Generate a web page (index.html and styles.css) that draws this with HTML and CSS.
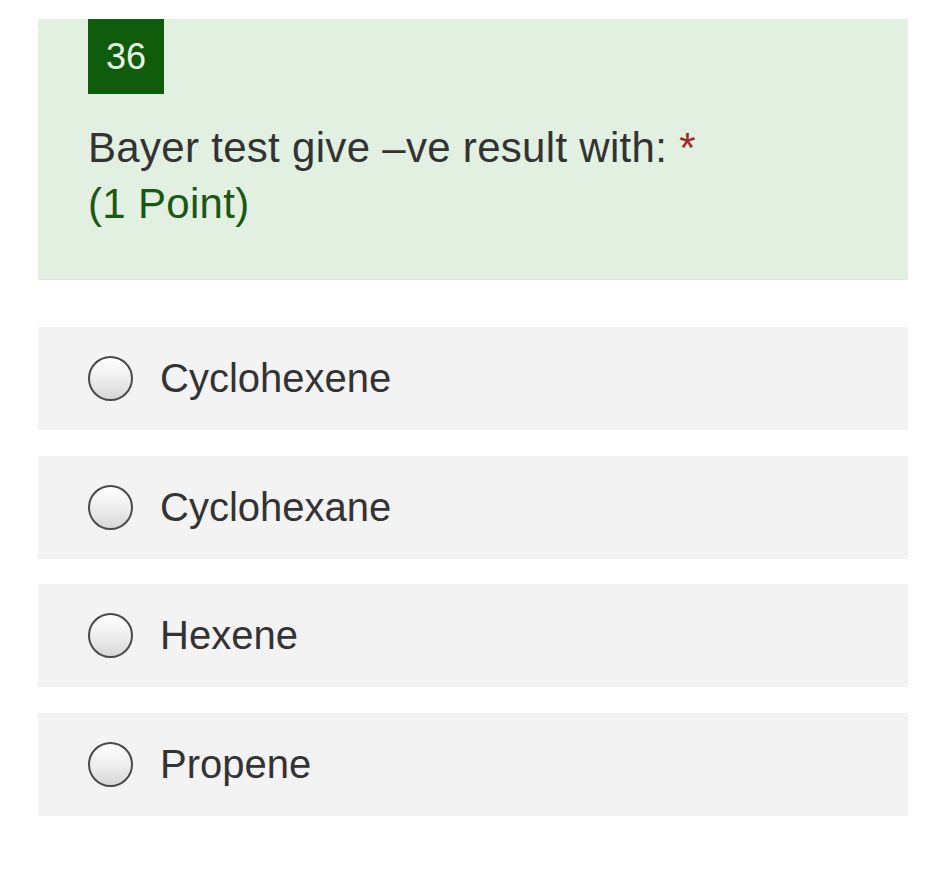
FILE: index.html
```html
<!DOCTYPE html>
<html lang="en">
<head>
<meta charset="utf-8">
<title>Question 36</title>
<link rel="stylesheet" href="styles.css">
</head>
<body>
<main class="quiz">
  <section class="question">
    <div class="badge">36</div>
    <div class="q-text">
      <span class="q-title">Bayer test give –ve result with:</span> <span class="req">*</span><br>
      <span class="points">(1 Point)</span>
    </div>
  </section>
  <ul class="options">
    <li class="option"><span class="radio"></span><span class="label">Cyclohexene</span></li>
    <li class="option"><span class="radio"></span><span class="label">Cyclohexane</span></li>
    <li class="option"><span class="radio"></span><span class="label">Hexene</span></li>
    <li class="option"><span class="radio"></span><span class="label">Propene</span></li>
  </ul>
</main>
</body>
</html>
```

FILE: styles.css
```css
html, body {
  margin: 0;
  padding: 0;
  background: #ffffff;
}

body {
  font-family: "Liberation Sans", Arial, Helvetica, sans-serif;
  color: #333333;
}

.quiz {
  width: 870px;
  padding: 19px 38px 0;
}

.question {
  background: #e2f0e1;
  padding: 0 50px 47px;
  border-bottom: 1px solid #dbe8da;
}

.badge {
  width: 76px;
  height: 75px;
  background: #0e5c0c;
  color: #e8f6e2;
  font-size: 36px;
  display: flex;
  align-items: center;
  justify-content: center;
}

.q-text {
  margin-top: 26px;
  font-size: 42px;
  line-height: 56px;
  letter-spacing: 0.3px;
}

.q-title {
  color: #333333;
}

.req {
  color: #a52a26;
}

.points {
  color: #1b5814;
}

.options {
  list-style: none;
  margin: 47px 0 0;
  padding: 0;
  display: flex;
  flex-direction: column;
  gap: 25.5px;
}

.option {
  height: 103px;
  background: #f3f3f3;
  display: flex;
  align-items: center;
  padding-left: 50px;
}

.radio {
  width: 45px;
  height: 45px;
  box-sizing: border-box;
  border: 2px solid #4a4a4a;
  border-radius: 50%;
  background: linear-gradient(180deg, #ffffff 0%, #ececec 55%, #d6d6d6 100%);
  margin-right: 27px;
  flex: none;
}

.label {
  font-size: 40px;
  color: #333333;
}
```
